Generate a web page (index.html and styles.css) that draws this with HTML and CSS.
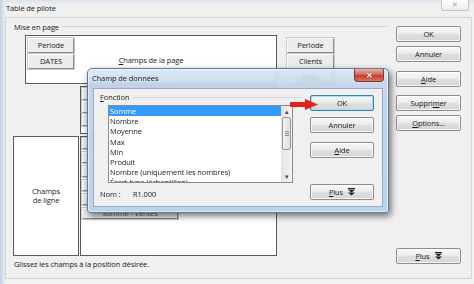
FILE: index.html
```html
<!DOCTYPE html>
<html>
<head>
  <meta charset="utf-8"/>
  <title>Table de pilote</title>
  <link rel="stylesheet" href="styles.css">
</head>
<body>

<div id="window">
  <div id="titleBar">
    <span class="title">Table de pilote</span>
    <span class="closeButton">✕</span>
  </div>
  <div id="panel">
    <div id="layout">
      <div class="groupLabel">Mise en page</div>
      <div id="areas">
        <div id="pageArea">
          <div class="fieldList">
            <div class="field">Periode</div>
            <div class="field">DATES</div>
          </div>
          <div class="areaName"><u>C</u>hamps de la page</div>
        </div>
        <div id="columnArea">
          <div class="field smallField"></div>
          <div class="field smallField"></div>
          <div class="field smallField"></div>
        </div>
        <div id="rowArea">
          <div class="areaName">Champs<br>de ligne</div>
        </div>
        <div id="dataArea">
          <div class="field dataField"></div>
          <div class="field dataField"></div>
          <div class="field dataField"></div>
          <div class="field dataField"></div>
          <div class="field dataField"></div>
          <div class="field dataField">Somme - Ventes</div>
        </div>
        <div id="fieldSelector">
          <div class="field">Periode</div>
          <div class="field">Clients</div>
          <div class="field">Mois</div>
        </div>
      </div>
      <div class="hint">Glissez les champs à la position désirée.</div>
    </div>
    <div id="buttons">
      <button>OK</button>
      <button class="annuler">Annuler</button>
      <button class="aide"><u>A</u>ide</button>
      <button class="supprimer">Suppri<u>m</u>er</button>
      <button class="options"><u>O</u>ptions...</button>
      <button class="plus"><u>P</u>lus<svg width="7" height="8" viewBox="0 0 7 8"><rect width="7" height="1.2"/><polygon points="0,1.8 7,1.8 3.5,4.6"/><polygon points="0,4.6 7,4.6 3.5,7.6"/></svg></button>
    </div>
  </div>
</div>

<div id="dataFieldDialog">
  <div class="dialogTitle">Champ de données</div>
  <span class="dialogClose">✕</span>
  <div class="dialogClient">
    <div class="dialogMain">
      <div class="groupLabel"><span><u>F</u>onction</span></div>
      <div class="listBox">
        <ul class="items">
          <li class="selected">Somme</li>
          <li>Nombre</li>
          <li>Moyenne</li>
          <li>Max</li>
          <li>Min</li>
          <li>Produit</li>
          <li>Nombre (uniquement les nombres)</li>
          <li>Écart-type (échantillon)</li>
        </ul>
        <div class="scrollbar">
          <div class="arrow">▴</div>
          <div class="thumb"><span></span><span></span><span></span></div>
          <div class="track"></div>
          <div class="arrow">▾</div>
        </div>
      </div>
      <div class="nameRow"><span class="nameLabel">Nom :</span>R1.000</div>
    </div>
    <div class="dialogButtons">
      <button class="default">OK</button>
      <button class="annuler">Annuler</button>
      <button class="aide"><u>A</u>ide</button>
      <button class="plus"><u>P</u>lus<svg width="7" height="8" viewBox="0 0 7 8"><rect width="7" height="1.2"/><polygon points="0,1.8 7,1.8 3.5,4.6"/><polygon points="0,4.6 7,4.6 3.5,7.6"/></svg></button>
    </div>
  </div>
</div>

<svg id="arrow" width="28" height="11" viewBox="0 0 28 11">
  <rect x="0" y="3" width="16" height="5" fill="#e3211c"/>
  <polygon points="15,0 28,5.5 15,11" fill="#e3211c"/>
</svg>

</body>
</html>
```

FILE: styles.css
```css
body {
  margin: 0;
  width: 474px;
  height: 284px;
  overflow: hidden;
  position: relative;
  background: linear-gradient(to right, #c2d2e1 0, #d8e2eb 3px, #eceff2 5px, #f2f2f2 6px);
  font-family: "Open Sans", sans-serif;
  font-size: 7.5px;
  letter-spacing: -0.1px;
  color: #1b1b1b;
}
u {
  text-decoration-thickness: 1px;
  text-underline-offset: 1px;
}
#window {
  height: 284px;
  padding-left: 5px;
  box-sizing: border-box;
}
#titleBar {
  height: 17px;
  display: flex;
  background: linear-gradient(#dae3ec 0, #edeff1 4px, #f0f0f0 7px);
}
#titleBar .title {
  line-height: 17px;
  padding-left: 1px;
}
.closeButton {
  margin-left: auto;
  margin-right: 5px;
  width: 28px;
  height: 11px;
  box-sizing: border-box;
  border: 1px solid #c4c4c4;
  border-top: none;
  border-radius: 0 0 3px 3px;
  background: linear-gradient(#fdfdfd, #eeeeee);
  color: #a3a3a3;
  font-size: 7px;
  line-height: 10px;
  text-align: center;
}
#panel {
  width: 467px;
  height: 262px;
  box-sizing: border-box;
  border: 1px solid #d4d4d4;
  background: #f0f0f0;
  display: flex;
}
#layout {
  width: 390px;
  flex: none;
}
.groupLabel {
  display: flex;
  align-items: center;
  height: 17px;
  padding-left: 8px;
  margin-right: 9px;
}
.groupLabel::after {
  content: "";
  flex: 1;
  border-top: 1px solid #d3d3d3;
  margin-left: 3px;
}
#areas {
  display: grid;
  margin-left: 7px;
  grid-template-columns: 67px 197px 10px 47px;
  grid-template-rows: 49px 48px 120px;
  row-gap: 2px;
}
#pageArea, #columnArea, #rowArea, #dataArea {
  box-sizing: border-box;
  border: 1px solid #5a5a5a;
  background: #fff;
}
#pageArea {
  grid-column: 1 / 3;
  grid-row: 1;
  margin-left: 12px;
  display: grid;
}
#pageArea > * {
  grid-area: 1 / 1;
}
#pageArea .fieldList {
  padding: 2px;
  display: flex;
  flex-direction: column;
  gap: 1px;
}
#pageArea .areaName {
  place-self: center;
}
#columnArea {
  grid-column: 2;
  grid-row: 2;
  padding: 1px;
  display: flex;
  flex-direction: column;
  gap: 1px;
}
#rowArea {
  grid-column: 1;
  grid-row: 3;
  width: 66px;
  display: flex;
  align-items: center;
  justify-content: center;
  text-align: center;
  line-height: 9.5px;
}
#dataArea {
  grid-column: 2;
  grid-row: 3;
  padding: 1px;
  display: flex;
  flex-direction: column;
  gap: 3px;
}
#fieldSelector {
  grid-column: 4;
  grid-row: 1 / 4;
  padding-top: 3px;
  display: flex;
  flex-direction: column;
  gap: 1px;
}
.field {
  width: 46px;
  height: 15px;
  box-sizing: border-box;
  border: 1px solid;
  border-color: #fdfdfd #8a8a8a #8a8a8a #fdfdfd;
  background: #ececec;
  box-shadow: 0 0 0 1px #c8c8c8;
  text-align: center;
  line-height: 13px;
  white-space: nowrap;
  overflow: hidden;
}
#fieldSelector .field {
  width: 47px;
}
.smallField {
  width: 90px;
  height: 12px;
}
.dataField {
  width: 96px;
  height: 11px;
  line-height: 9px;
  color: #555;
}
.hint {
  margin-top: 2px;
  padding-left: 8px;
  line-height: 12px;
}
#buttons {
  width: 65px;
  display: flex;
  flex-direction: column;
  padding: 8px 0 14px;
  box-sizing: border-box;
}
button {
  font: inherit;
  letter-spacing: inherit;
  color: inherit;
  height: 16px;
  padding: 0;
  box-sizing: border-box;
  border: 1px solid #8d8d8d;
  border-radius: 2px;
  background: linear-gradient(#f7f7f7, #ededed 45%, #dfdfdf 52%, #d5d5d5);
  box-shadow: inset 0 0 0 1px rgba(255, 255, 255, 0.75);
  line-height: 14px;
  text-align: center;
  white-space: nowrap;
}
button svg {
  fill: #222;
  margin-left: 5px;
  vertical-align: -1px;
}
#buttons .annuler { margin-top: 4px; }
#buttons .aide { margin-top: 9px; }
#buttons .supprimer { margin-top: 8px; }
#buttons .options { margin-top: 4px; }
#buttons .plus { margin-top: auto; }

#dataFieldDialog {
  position: absolute;
  left: 87px;
  top: 68px;
  width: 302px;
  height: 145px;
  box-sizing: border-box;
  border: 1px solid #60799a;
  border-radius: 5px 5px 3px 3px;
  padding: 0 5px 5px;
  background: linear-gradient(rgba(216, 229, 243, 0.86), rgba(190, 210, 233, 0.88) 19px, #bcd3eb);
  backdrop-filter: blur(1.5px);
  box-shadow: 2px 3px 7px rgba(0, 0, 0, 0.55), inset 0 0 0 1px rgba(255, 255, 255, 0.55);
  display: flex;
  flex-direction: column;
}
.dialogTitle {
  height: 19px;
  line-height: 19px;
  margin-left: -1px;
}
.dialogClose {
  position: absolute;
  right: 4px;
  top: 0;
  width: 30px;
  height: 13px;
  box-sizing: border-box;
  border: 1px solid #7d3a33;
  border-top: none;
  border-radius: 0 0 4px 4px;
  background: linear-gradient(#eab0a4, #d46a5a 45%, #c2402f 55%, #d9725f);
  color: #fff;
  font-size: 8px;
  font-weight: bold;
  line-height: 12px;
  text-align: center;
  text-shadow: 0 0 1px #5a1a12;
}
.dialogClient {
  flex: 1;
  box-sizing: border-box;
  border: 1px solid #97abc2;
  background: #f0f0f0;
  display: flex;
}
.dialogMain {
  width: 208px;
  padding-left: 6px;
  box-sizing: border-box;
}
.dialogMain .groupLabel {
  height: 16px;
  padding-left: 0;
  margin-right: 0;
}
.listBox {
  margin-left: 8px;
  width: 185px;
  height: 78px;
  box-sizing: border-box;
  border: 1px solid #878b93;
  background: #fff;
  display: flex;
  overflow: hidden;
}
.items {
  flex: 1;
  margin: 0;
  padding: 0;
  list-style: none;
  line-height: 10.2px;
  white-space: nowrap;
  overflow: hidden;
}
.items li {
  padding-left: 1px;
}
.items li.selected {
  background: #3399ff;
  color: #fff;
}
.scrollbar {
  width: 11px;
  background: linear-gradient(to right, #e4e4e4, #f4f4f4);
  display: flex;
  flex-direction: column;
  align-items: center;
}
.scrollbar .arrow {
  height: 11px;
  line-height: 11px;
  font-size: 7px;
  color: #444;
}
.scrollbar .thumb {
  width: 9px;
  height: 33px;
  box-sizing: border-box;
  border: 1px solid #989898;
  border-radius: 2px;
  background: linear-gradient(to right, #f3f3f3, #dedede);
  display: flex;
  flex-direction: column;
  align-items: center;
  justify-content: center;
  gap: 1px;
}
.scrollbar .thumb span {
  width: 4px;
  height: 1px;
  background: #888;
}
.scrollbar .track {
  flex: 1;
}
.nameRow {
  margin-top: 5px;
  line-height: 12px;
}
.nameLabel {
  display: inline-block;
  width: 33px;
}
.dialogButtons {
  margin-left: 8px;
  width: 64px;
  padding: 6px 0 6px;
  box-sizing: border-box;
  display: flex;
  flex-direction: column;
}
.dialogButtons .default {
  border-color: #3d7fb2;
  box-shadow: inset 0 0 0 1px #a6def5;
}
.dialogButtons .annuler { margin-top: 6px; }
.dialogButtons .aide { margin-top: 9px; }
.dialogButtons .plus { margin-top: auto; }
#arrow {
  position: absolute;
  left: 290px;
  top: 99px;
}
```
